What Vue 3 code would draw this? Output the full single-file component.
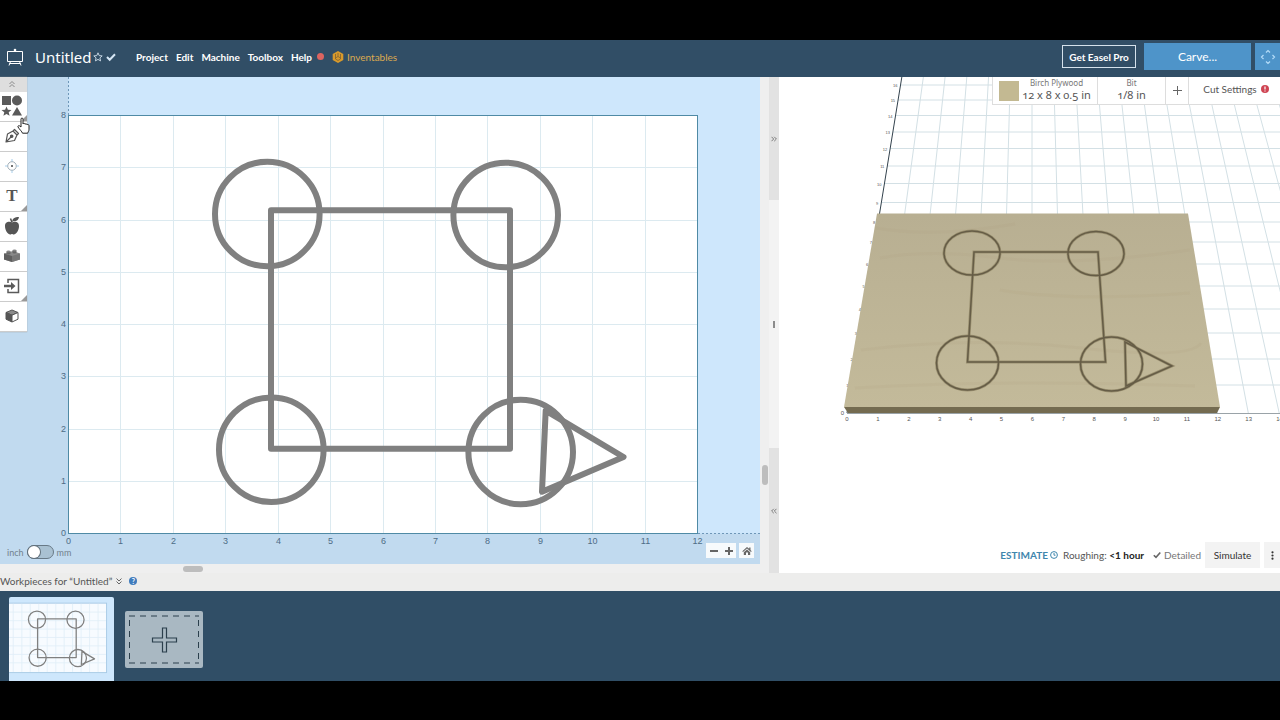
<template>
  <div class="screen">
    <header class="topbar">
      <a href="#" class="logo" aria-label="Home">
        <svg width="18" height="18" viewBox="0 0 18 18" fill="none" stroke="#fff" stroke-width="1">
          <path d="M1.500 3.500h15v10h-15zM9 1v2.500M4.500 13.500l-1.500 4M13.500 13.500l1.500 4M3.500 15.500h11" />
          <circle cx="9" cy="2" r="1.300" fill="#fff" stroke="none" />
        </svg>
      </a>
      <h1>Untitled</h1>
      <button class="plain star" aria-label="Favorite">
        <svg width="10" height="10" viewBox="0 0 10 10" fill="none" stroke="#c3d3e0">
          <path d="M5 .8l1.200 2.800 3 .3-2.300 2 .7 3L5 7.400 2.400 8.900l.7-3-2.300-2 3-.3z" />
        </svg>
      </button>
      <svg class="saved" width="10" height="10" viewBox="0 0 10 10" fill="none" stroke="#d5e6f4" stroke-width="2">
        <path d="M1 5l2.700 2.700L9 2.200" />
      </svg>
      <nav class="menu">
        <a v-for="item in menu" :key="item" href="#">{{ item }}</a>
      </nav>
      <span class="dot"></span>
      <a href="#" class="inventables">
        <svg width="12" height="12" viewBox="0 0 12 12">
          <path d="M6 .1l5.300 3v5.800L6 11.900.7 8.900V3.100z" fill="#d99a2b" />
          <path d="M3.500 3v5M6 2v3.500M8.500 3v5M3.500 8L6 9.500 8.500 8M6 5.500L3.500 7M6 5.500L8.500 7" fill="none" stroke="#7d6233" stroke-width=".8" />
        </svg>
        Inventables
      </a>
      <div class="actions">
        <button class="pro">Get Easel Pro</button>
        <button class="carve">Carve...</button>
        <button class="jog" aria-label="Jog machine">
          <svg width="16" height="16" viewBox="0 0 16 16" fill="none" stroke="#b4dcf8" stroke-width="1.200">
            <path d="M6 3.500l2-2 2 2M6 12.500l2 2 2-2M3.500 6l-2 2 2 2M12.500 6l2 2-2 2" />
          </svg>
        </button>
      </div>
    </header>

    <main class="workspace">
      <section class="editor">
        <div class="canvas">
          <svg class="sheet" viewBox="0 77 760 487" preserveAspectRatio="xMinYMin slice">
            <rect x="0" y="77" width="760" height="487" fill="#c1daef" />
            <rect x="68.500" y="77" width="692" height="456.500" fill="#cee7fc" />
            <path d="M68.500 77v38M698 533.500h62" stroke="#6f97b8" stroke-dasharray="2 2" />
            <rect x="68.500" y="115.500" width="629" height="418" fill="#fff" />
            <g stroke="#dceaf0">
              <line v-for="n in 11" :key="'v' + n" :x1="gridX(n)" :x2="gridX(n)" y1="116" y2="533" />
              <line v-for="n in 7" :key="'h' + n" x1="69" x2="697" :y1="gridY(n)" :y2="gridY(n)" />
            </g>
            <rect x="68.500" y="115.500" width="629" height="418" fill="none" stroke="#4f8aa5" />
            <g class="ruler">
              <text v-for="n in 13" :key="'x' + n" :x="gridX(n - 1)" y="544" text-anchor="middle">{{ n - 1 }}</text>
              <text v-for="n in 9" :key="'y' + n" x="66" :y="gridY(n - 1) + 2" text-anchor="end">{{ n - 1 }}</text>
            </g>
            <g class="shapes">
              <circle v-for="(c, i) in circles" :key="i" :cx="c[0]" :cy="c[1]" r="52.300" />
              <rect x="271" y="210.300" width="239" height="238.400" />
              <path :d="triangle" />
            </g>
          </svg>

          <div class="tools">
            <button class="collapse" aria-label="Collapse tools">
              <svg width="8" height="8" viewBox="0 0 8 8" fill="none" stroke="#8a8a8a"><path d="M1.500 4L4 1.500 6.500 4M1.500 7L4 4.500 6.500 7" /></svg>
            </button>
            <button class="tool more" aria-label="Shapes">
              <svg width="22" height="22" viewBox="0 0 22 22" fill="#5a5a5a">
                <rect x="1" y="1" width="9" height="9" /><circle cx="16" cy="5.500" r="5" />
                <path d="M5.500 11.500l1.400 3.300 3.600.2-2.800 2.300.9 3.500-3.100-1.900-3.100 1.900.9-3.500L.5 15l3.600-.2zM16 12l5 8.500H11z" />
              </svg>
            </button>
            <button class="tool" aria-label="Pen">
              <svg width="16" height="16" viewBox="0 0 16 16" fill="none" stroke="#555" stroke-width="1.200" stroke-linejoin="round">
                <path d="M2 14l1.500-8L9 3l4 4-2.500 5.500zM2 14l5-5M9 3l1.500-1.500 4 4L13 7" /><circle cx="7.700" cy="8.300" r="1.200" fill="#555" />
              </svg>
            </button>
            <button class="tool" aria-label="Drill">
              <svg width="16" height="16" viewBox="0 0 16 16" fill="none" stroke="#8d9aa5" stroke-width=".8">
                <circle cx="8" cy="8" r="4.300" /><path d="M8 1v2.500M8 12.500V15M1 8h2.500M12.500 8H15" stroke="#8fc0e4" />
                <circle cx="8" cy="8" r="1" fill="#444" stroke="none" />
              </svg>
            </button>
            <button class="tool more letter">T</button>
            <button class="tool" aria-label="Icons">
              <svg width="18" height="20" viewBox="0 0 18 20" fill="#555">
                <path d="M9 6.500c2-1.200 7-1.500 7 3.700 0 4.300-3 8.300-5.200 8.300-1 0-1.200-.6-1.800-.6s-.8.6-1.800.6C5 18.500 2 14.500 2 10.200 2 5 7 5.300 9 6.500zM9.300 6C9 2.500 11.500 1 16 1c-.2 3-2.700 4.500-5.700 4.200z" />
                <path d="M9 6.500L7.500 2.500" stroke="#555" stroke-width="1.500" />
              </svg>
            </button>
            <button class="tool" aria-label="Apps">
              <svg width="18" height="16" viewBox="0 0 18 16">
                <path d="M1 5.500L10 3l7 2.500v6L9 14l-8-2.500z" fill="#8a8a8a" /><path d="M1 5.500L9 8v6l-8-2.500z" fill="#5f5f5f" /><path d="M9 8l8-2.500v6L9 14z" fill="#777" />
                <path d="M3.500 3.500v2a2 1 0 0 0 4 0v-2zM9.500 2.500v2a2 1 0 0 0 4 0v-2z" fill="#666" />
                <ellipse cx="5.500" cy="3.500" rx="2" ry="1" fill="#858585" /><ellipse cx="11.500" cy="2.500" rx="2" ry="1" fill="#858585" />
              </svg>
            </button>
            <button class="tool more" aria-label="Import">
              <svg width="16" height="16" viewBox="0 0 16 16" fill="none" stroke="#5a5a5a" stroke-width="1.500">
                <path d="M4 5V1.500h10.500v13H4V11" /><path d="M0 8h8" stroke-width="2.500" /><path d="M7 4l4.500 4L7 12z" fill="#5a5a5a" stroke="none" />
              </svg>
            </button>
            <button class="tool" aria-label="3D box">
              <svg width="14" height="14" viewBox="0 0 14 14" stroke="#555" stroke-width="1" stroke-linejoin="round">
                <path d="M1 3.500L7 1l6 2.500-6 2.700z" fill="#8a8a8a" /><path d="M1 3.500l6 2.700V13L1 10.200z" fill="#555" /><path d="M13 3.500L7 6.200V13l6-2.800z" fill="#fff" />
              </svg>
            </button>
          </div>

          <svg class="pointer" width="13" height="17" viewBox="0 0 13 17" fill="#fff" stroke="#222" stroke-linejoin="round">
            <path d="M4 10V2.200c0-1.600 2-1.600 2 0V7c.3-1 2-.9 2 .3.500-.8 2-.6 2 .5.600-.6 2-.4 2 .9v3.500c0 2-1 2.500-1.300 4H5.500c-.5-1.700-3-3.700-4.500-6.200C.5 8.800 2 8.200 3 9.200z" />
          </svg>

          <label class="units">
            inch
            <input v-model="metric" type="checkbox" />
            mm
          </label>

          <div class="zoom">
            <div class="pair">
              <button aria-label="Zoom out"><svg width="10" height="10" viewBox="0 0 10 10"><path d="M1 5h8" stroke="#666" stroke-width="2" /></svg></button>
              <button aria-label="Zoom in"><svg width="10" height="10" viewBox="0 0 10 10"><path d="M1 5h8M5 1v8" stroke="#666" stroke-width="2" /></svg></button>
            </div>
            <button aria-label="Reset zoom">
              <svg width="10" height="10" viewBox="0 0 10 10" fill="#666"><path d="M5 1L.3 5.200l.7.700L5 2.500l4 3.400.7-.7L8.500 4V1.500H7.200v1.300zM5 3.500L1.800 6.200V9H4V6.500h2V9h2.200V6.200z" /></svg>
            </button>
          </div>
        </div>
        <div class="track-y"><span class="thumb-y"></span></div>
        <div class="track-x"><span class="thumb-x"></span></div>
      </section>

      <div class="divider">
        <button class="end top" aria-label="Expand editor">
          <svg width="6" height="6" viewBox="0 0 6 6" fill="none" stroke="#7c7c7c"><path d="M.5.800L2.700 3 .5 5.200M3.200.800L5.400 3 3.200 5.200" /></svg>
        </button>
        <span class="grip"></span>
        <button class="end bottom" aria-label="Expand preview">
          <svg width="6" height="6" viewBox="0 0 6 6" fill="none" stroke="#7c7c7c"><path d="M2.800.800L.6 3l2.200 2.200M5.500.800L3.300 3l2.200 2.200" /></svg>
        </button>
      </div>

      <section class="preview">
        <svg class="scene" viewBox="779 77 501 496" preserveAspectRatio="xMinYMin slice">
          <defs>
            <linearGradient id="wood" x1="0" y1="0" x2="0" y2="1">
              <stop offset="0" stop-color="#b8af92" />
              <stop offset="1" stop-color="#c3ba9a" />
            </linearGradient>
          </defs>
          <g class="floor">
            <line v-for="n in 24" :key="'c' + n" :x1="1032 + 21.700 * (n - 6)" y1="76" :x2="1032 + 30.900 * (n - 6)" y2="413" />
            <line v-for="(y, i) in rows" :key="'r' + i" :x1="axisX(y)" :y1="y" x2="1280" :y2="y" />
          </g>
          <line x1="902" y1="76" x2="847" y2="413" stroke="#33424d" />
          <line x1="847" y1="413.500" x2="1280" y2="413.500" stroke="#9aa3a8" />
          <g class="ticks">
            <text v-for="n in 15" :key="'t' + n" :x="847 + 30.900 * (n - 1)" y="421" text-anchor="middle">{{ n - 1 }}</text>
            <text x="844" y="415" text-anchor="end">0</text>
            <text v-for="(y, i) in rows" :key="'l' + i" class="far" :x="axisX(y) - 3" :y="y + 2" text-anchor="end">{{ i + 1 }}</text>
          </g>
          <path d="M877 213.500H1188L1220 407H844z" fill="url(#wood)" />
          <g fill="none" stroke="#aaa07f" stroke-opacity=".12" stroke-width="3">
            <path d="M880 258q50-9 120 0t190-8M861 350q110-14 220-2t120-5M875 228q60 10 140-4M1000 290q70 12 190 3M855 388q150-9 340-2" />
          </g>
          <path d="M844 407H1220L1217 413H848z" fill="#746b50" />
          <g v-for="layer in ['wall', 'groove']" :key="layer" :class="layer">
            <ellipse v-for="(e, i) in pockets" :key="i" :cx="e[0]" :cy="e[1]" :rx="e[2]" :ry="e[3]" />
            <path d="M974 252H1098L1105.500 362H967.500z" />
            <path d="M1125 342L1172 366 1126 386z" />
          </g>
        </svg>

        <div class="cut-bar">
          <button class="cell material">
            <span class="swatch"></span>
            <span class="stack"><small>Birch Plywood</small><b>12 x 8 x 0.5 in</b></span>
          </button>
          <button class="cell bit"><span class="stack"><small>Bit</small><b>1/8 in</b></span></button>
          <button class="cell add" aria-label="Add bit">
            <svg width="9" height="9" viewBox="0 0 9 9"><path d="M0 4.500h9M4.500 0v9" stroke="#666" /></svg>
          </button>
          <button class="cell settings">
            Cut Settings
            <svg width="8" height="8" viewBox="0 0 8 8"><circle cx="4" cy="4" r="4" fill="#cf4453" /><path d="M4 1.500v3M4 5.500v1" stroke="#fff" stroke-width="1.200" /></svg>
          </button>
        </div>

        <div class="estimate-bar">
          <a href="#" class="estimate">
            ESTIMATE
            <svg width="8" height="8" viewBox="0 0 8 8" fill="none" stroke="#3f86ad"><circle cx="4" cy="4" r="3.400" /><path d="M4 2v2.200h1.500" /></svg>
          </a>
          <span>Roughing: <strong>&lt;1 hour</strong></span>
          <span class="detailed">
            <svg width="8" height="8" viewBox="0 0 8 8" fill="none" stroke="#666" stroke-width="1.600"><path d="M.8 4.200L3 6.400l4.300-4.900" /></svg>
            Detailed
          </span>
          <button class="simulate">Simulate</button>
          <button class="dots" aria-label="More options">
            <svg width="3" height="9" viewBox="0 0 3 9" fill="#333"><circle cx="1.500" cy="1.300" r="1.100" /><circle cx="1.500" cy="4.500" r="1.100" /><circle cx="1.500" cy="7.700" r="1.100" /></svg>
          </button>
        </div>
      </section>
    </main>

    <div class="pieces-title">
      <button class="plain">
        Workpieces for “Untitled”
        <svg width="6" height="7" viewBox="0 0 6 7" fill="none" stroke="#666"><path d="M.5.500L3 3 5.500.500M.5 3.500L3 6l2.500-2.500" /></svg>
      </button>
      <a href="#" class="help">?</a>
    </div>
    <footer class="pieces">
      <button class="piece" aria-label="Workpiece 1">
        <svg viewBox="94 74 650 520" preserveAspectRatio="xMinYMin slice">
          <rect x="68" y="112" width="630" height="430" fill="#f7fbff" stroke="#a9cbe6" stroke-width="6" />
          <g stroke="#e0edf7" stroke-width="5">
            <line v-for="n in 11" :key="'v' + n" :x1="gridX(n)" :x2="gridX(n)" y1="116" y2="538" />
            <line v-for="n in 7" :key="'h' + n" x1="69" x2="694" :y1="gridY(n)" :y2="gridY(n)" />
          </g>
          <g class="shapes mini">
            <circle v-for="(c, i) in circles" :key="i" :cx="c[0]" :cy="c[1]" r="53" />
            <rect x="271" y="210" width="239" height="239" />
            <path :d="triangle" />
          </g>
        </svg>
      </button>
      <button class="add-piece" aria-label="Add workpiece">
        <svg width="78" height="57" viewBox="0 0 78 57" fill="none" stroke="#2b3f4c">
          <path d="M4 5h70M4 52h70" stroke-dasharray="6 5" />
          <path d="M4.500 9v40M73.500 9v40" stroke-dasharray="6 5" />
          <path d="M37.500 17h4v10h10v4h-10v10h-4V31h-10v-4h10z" stroke-width="1.200" />
        </svg>
      </button>
    </footer>
  </div>
</template>

<script setup>
import { ref } from 'vue';

const metric = ref(false);
const menu = ['Project', 'Edit', 'Machine', 'Toolbox', 'Help'];

// design shapes, in canvas units
const circles = [[267.3, 214], [505.7, 215], [271.3, 449.7], [520.7, 452]];
const triangle = 'M545.700 410.700L623.500 457 542 491.700z';

const gridX = (n) => Math.round(68 + n * 52.42) + 0.5;
const gridY = (n) => Math.round(533 - n * 52.25) + 0.5;

// rows of the 3D floor, nearest first
const rows = [385, 359, 333, 309, 286, 264, 242, 222, 202.5, 183.5, 166, 148.5, 132, 115.5, 100, 85];
const axisX = (y) => 847 + (55 * (413 - y)) / 337;
const pockets = [
  [972, 253, 28, 22],
  [1096, 253.5, 28, 22],
  [967.5, 363, 31, 27],
  [1111.5, 364, 31, 27],
];
</script>

<style>
body {
  background: #000;
}
</style>

<style scoped>
.screen {
  display: flex;
  flex-direction: column;
  box-sizing: border-box;
  min-height: 100vh;
  padding: 40px 0 39px;
  overflow: hidden;
  background: #000;
  font-family: Lato, 'Noto Sans', sans-serif;
  font-size: 10px;
  color: #555;
}

button {
  font: inherit;
  color: inherit;
  padding: 0;
  border: none;
  background: none;
  cursor: pointer;
}

a {
  color: inherit;
  text-decoration: none;
}

svg {
  display: block;
  flex-shrink: 0;
}

.topbar {
  display: flex;
  align-items: center;
  height: 37px;
  box-sizing: border-box;
  padding: 0 0 4px 6px;
  background: #314e66;
  color: #fff;
}

h1 {
  width: 55px;
  margin: 0 3px 0 11px;
  font-family: 'Noto Sans', 'Open Sans', sans-serif;
  font-size: 15px;
  font-weight: 400;
  line-height: 18px;
}

.saved {
  margin-left: 3px;
}

.menu {
  display: flex;
  gap: 8px;
  margin-left: 20px;
  font-weight: 700;
}

.dot {
  width: 7px;
  height: 7px;
  margin: 0 8px 0 5px;
  border-radius: 50%;
  background: #dc6460;
}

.inventables {
  display: flex;
  align-items: center;
  gap: 3px;
  color: #dcaa50;
}

.actions {
  display: flex;
  align-items: center;
  margin-left: auto;
}

.pro {
  width: 74px;
  height: 23px;
  border: 1px solid #d5e2ec;
  font-weight: 700;
}

.carve {
  width: 107px;
  height: 27px;
  margin-left: 8px;
  background: #4e94c9;
  font-size: 12px;
}

.jog {
  display: flex;
  align-items: center;
  justify-content: center;
  width: 25px;
  height: 27px;
  margin-left: 4px;
  background: #4e94c9;
}

.workspace {
  flex: 1;
  display: grid;
  grid-template-columns: 769fr 10px 501fr;
  min-height: 400px;
}

.editor {
  display: grid;
  grid-template-columns: 1fr 9px;
  grid-template-rows: 1fr 9px;
  background: #efefef;
}

.canvas {
  position: relative;
  background: #c1daef;
}

.sheet,
.scene {
  width: 100%;
  height: 100%;
}

.ruler {
  font-family: 'Liberation Sans', Arial, sans-serif;
  font-size: 9px;
  fill: #4e6c86;
}

.shapes {
  fill: none;
  stroke: #808080;
  stroke-width: 6;
  stroke-linejoin: round;
}

.mini {
  stroke-width: 8;
}

.tools {
  position: absolute;
  top: 0;
  left: 0;
  width: 27px;
  background: #fff;
  box-shadow: 0 0 1px #999;
}

.collapse,
.tool {
  display: flex;
  align-items: center;
  justify-content: center;
  width: 100%;
  padding: 0 3px 1px 0;
}

.collapse {
  height: 15px;
  background: #dedede;
}

.tool {
  position: relative;
  height: 30px;
  border-bottom: 1px solid #ccc;
}

.more::after {
  content: '';
  position: absolute;
  right: 0;
  bottom: 0;
  border-left: 6px solid transparent;
  border-bottom: 6px solid #999;
}

.letter {
  font-family: 'Liberation Serif', serif;
  font-size: 17px;
  font-weight: 700;
}

.pointer {
  position: absolute;
  top: 40px;
  left: 17px;
}

.units {
  position: absolute;
  left: 7px;
  bottom: 5px;
  display: flex;
  align-items: center;
  gap: 3px;
  font-size: 9px;
  color: #71818d;
}

.units input {
  appearance: none;
  width: 27px;
  height: 14px;
  margin: 0;
  border: 1px solid #687986;
  border-radius: 7px;
  background: #a9c1d2;
}

.units input::before {
  content: '';
  display: block;
  width: 12px;
  height: 12px;
  border-radius: 50%;
  background: #fff;
  box-shadow: 0 0 0 1px #62717c;
}

.units input:checked::before {
  margin-left: 13px;
}

.zoom {
  position: absolute;
  right: 6px;
  bottom: 6px;
  display: flex;
  gap: 3px;
}

.zoom button {
  display: flex;
  align-items: center;
  justify-content: center;
  width: 15px;
  height: 15px;
  background: #f7fafc;
}

.pair {
  display: flex;
}

.track-y,
.track-x {
  display: flex;
}

.track-y {
  justify-content: center;
  padding-top: 388px;
}

.thumb-y {
  width: 6px;
  height: 20px;
  border-radius: 3px;
  background: #bdbdbd;
}

.track-x {
  padding: 2px 0 0 183px;
}

.thumb-x {
  width: 20px;
  height: 6px;
  border-radius: 3px;
  background: #bdbdbd;
}

.divider {
  display: flex;
  flex-direction: column;
  align-items: center;
  justify-content: space-between;
  background: #f3f3f3;
}

.end {
  display: flex;
  align-items: center;
  justify-content: center;
  width: 100%;
  height: 123px;
  background: #e2e2e2;
}

.bottom {
  height: 125px;
}

.grip {
  width: 2px;
  height: 7px;
  background: #8c8c8c;
}

.preview {
  position: relative;
  overflow: hidden;
  background: #fff;
}

.floor {
  stroke: #d3e0e5;
  stroke-width: 1;
}

.ticks {
  font-family: 'Liberation Sans', Arial, sans-serif;
  font-size: 6px;
  fill: #555;
}

.far {
  font-size: 4px;
}

.wall,
.groove {
  fill: none;
}

.wall {
  stroke: #9a9070;
  stroke-width: 3;
}

.groove {
  stroke: #655c46;
  stroke-width: 1.5;
}

.cut-bar {
  position: absolute;
  top: 0;
  right: 0;
  display: flex;
  height: 27px;
  background: #fff;
  border-left: 1px solid #ddd;
  border-bottom: 1px solid #ddd;
}

.cell {
  display: flex;
  align-items: center;
  justify-content: center;
  border-right: 1px solid #ddd;
}

.cell:last-child {
  border-right: none;
}

.material {
  width: 105px;
  gap: 3px;
}

.swatch {
  width: 20px;
  height: 20px;
  background: #c3b992;
}

.stack {
  display: flex;
  flex-direction: column;
  align-items: center;
  padding-bottom: 3px;
  font-family: 'Noto Sans', 'Open Sans', sans-serif;
  line-height: 12px;
}

.stack small {
  font-size: 8px;
  color: #777;
}

.stack b {
  font-size: 11px;
  font-weight: 400;
  font-variant-numeric: oldstyle-nums;
}

.bit {
  width: 68px;
}

.add {
  width: 23px;
}

.settings {
  width: 91px;
  gap: 4px;
  padding: 0 0 3px 3px;
}

.estimate-bar {
  position: absolute;
  right: 0;
  bottom: 5px;
  display: flex;
  align-items: center;
  height: 26px;
}

.estimate {
  display: flex;
  align-items: center;
  gap: 2px;
  margin-right: 5px;
  font-weight: 700;
  color: #3f86ad;
}

strong {
  font-weight: 700;
  color: #222;
}

.detailed {
  display: flex;
  align-items: center;
  gap: 3px;
  margin: 0 4px 0 9px;
  color: #777;
}

.simulate {
  width: 55px;
  height: 26px;
  background: #f3f3f3;
  color: #333;
}

.dots {
  display: flex;
  align-items: center;
  justify-content: center;
  width: 16px;
  height: 26px;
  margin-left: 4px;
  background: #f3f3f3;
}

.pieces-title {
  display: flex;
  align-items: center;
  gap: 7px;
  height: 18px;
  box-sizing: border-box;
  padding-bottom: 2px;
  background: #ededec;
}

.plain {
  display: flex;
  align-items: center;
  gap: 4px;
}

.help {
  width: 8px;
  height: 8px;
  border-radius: 50%;
  background: #3f7cbd;
  color: #fff;
  font-size: 7px;
  font-weight: 700;
  line-height: 8px;
  text-align: center;
}

.pieces {
  display: flex;
  height: 90px;
  box-sizing: border-box;
  padding: 6px 0 0 9px;
  background: #304e66;
}

.piece {
  width: 105px;
  height: 84px;
  border-radius: 2px 2px 0 0;
  overflow: hidden;
  background: #cee7fc;
}

.piece svg {
  width: 100%;
  height: 100%;
}

.add-piece {
  width: 78px;
  height: 57px;
  margin: 14px 0 0 11px;
  border-radius: 2px;
  background: #a9b8c2;
}
</style>
